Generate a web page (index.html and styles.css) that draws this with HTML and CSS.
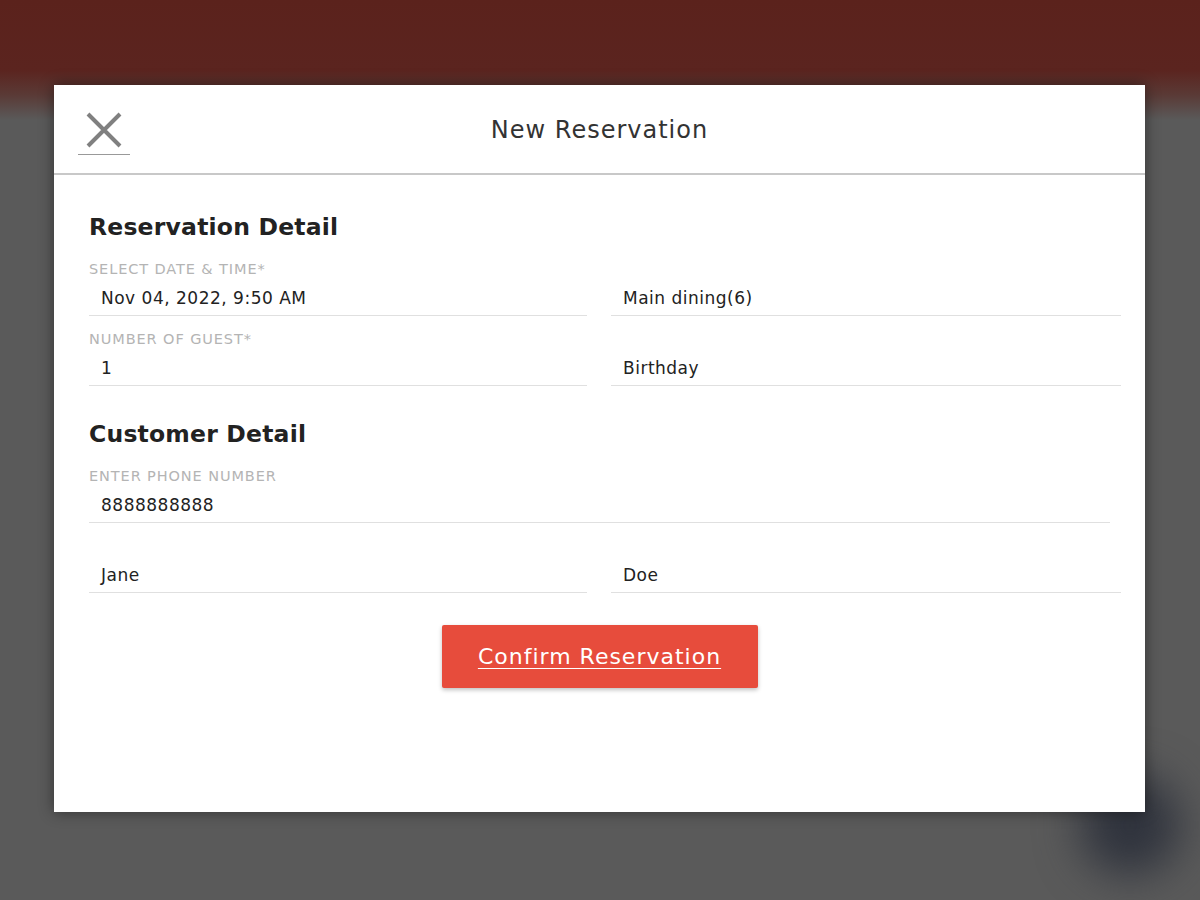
FILE: index.html
```html
<!DOCTYPE html>
<html lang="en">
<head>
  <meta charset="UTF-8">
  <title>New Reservation</title>
  <link rel="stylesheet" href="styles.css">
</head>
<body>

<div class="backdrop">
  <div class="fab-blur"></div>

  <div class="modal">
    <div class="modal-header">
      <button class="close-btn" aria-label="Close">
        <svg width="36" height="36" viewBox="0 0 36 36">
          <path d="M2 2 L34 34 M34 2 L2 34" stroke="#808080" stroke-width="4" fill="none"/>
        </svg>
      </button>
      <div class="modal-title">New Reservation</div>
    </div>

    <div class="modal-body">
      <h2 class="section-title">Reservation Detail</h2>
      <div class="field-grid">
        <div class="field">
          <label>Select date &amp; time*</label>
          <div class="value">Nov 04, 2022, 9:50 AM</div>
        </div>
        <div class="field">
          <label></label>
          <div class="value">Main dining(6)</div>
        </div>
        <div class="field">
          <label>Number of guest*</label>
          <div class="value">1</div>
        </div>
        <div class="field">
          <label></label>
          <div class="value">Birthday</div>
        </div>
      </div>

      <h2 class="section-title second">Customer Detail</h2>
      <div class="field phone">
        <label>Enter phone number</label>
        <div class="value">8888888888</div>
      </div>
      <div class="field-grid">
        <div class="field">
          <label></label>
          <div class="value">Jane</div>
        </div>
        <div class="field">
          <label></label>
          <div class="value">Doe</div>
        </div>
      </div>

      <div class="actions">
        <button class="confirm-btn">Confirm Reservation</button>
      </div>
    </div>
  </div>
</div>

</body>
</html>
```

FILE: styles.css
```css
html, body {
  margin: 0;
  height: 100%;
}

body {
  font-family: "DejaVu Sans", Arial, sans-serif;
  color: #222;
}

.backdrop {
  position: relative;
  height: 900px;
  overflow: hidden;
  display: flex;
  align-items: center;
  justify-content: center;
  background: linear-gradient(to bottom, #5b221c 0, #5b241f 70px, #5a3a36 95px, #5a5a5a 120px, #5a5a5a 100%);
}

.fab-blur {
  position: absolute;
  left: 1080px;
  top: 775px;
  width: 100px;
  height: 100px;
  border-radius: 50%;
  background: #2f333d;
  filter: blur(22px);
}

.modal {
  position: relative;
  width: 1091px;
  height: 727px;
  margin: 0 1px 3px 0;
  background: #fff;
  box-shadow: 0 0 14px rgba(0, 0, 0, 0.45);
  display: flex;
  flex-direction: column;
}

.modal-header {
  height: 88px;
  border-bottom: 2px solid #c8c8c8;
  display: flex;
  align-items: center;
  justify-content: center;
  position: relative;
}

.close-btn {
  position: absolute;
  left: 24px;
  top: 25px;
  width: 52px;
  height: 45px;
  padding: 2px 0 0;
  background: none;
  border: none;
  border-bottom: 1px solid #999;
  display: flex;
  justify-content: center;
  align-items: flex-start;
  cursor: pointer;
}

.modal-title {
  font-size: 24px;
  letter-spacing: 1px;
  color: #333;
  padding-top: 1px;
}

.modal-body {
  padding: 37px 24px 0 35px;
}

.section-title {
  margin: 0 0 17px;
  font-size: 23.5px;
  line-height: 30px;
  font-weight: 700;
  letter-spacing: 0.2px;
  color: #222;
}

.section-title.second {
  margin-top: 20px;
}

.field-grid {
  display: grid;
  grid-template-columns: 498px 510px;
  column-gap: 24px;
}

.field {
  margin-bottom: 13px;
}

.field label {
  display: block;
  height: 20px;
  line-height: 20px;
  font-size: 14.5px;
  letter-spacing: 0.9px;
  color: #b4b4b4;
  text-transform: uppercase;
}

.field .value {
  height: 36px;
  line-height: 38px;
  padding-left: 12px;
  font-size: 17px;
  letter-spacing: 0.5px;
  color: #222;
  border-bottom: 1px solid #e0e0e0;
}

.field.phone {
  width: 1021px;
}

.actions {
  display: flex;
  justify-content: center;
  padding-top: 19px;
  padding-right: 11px;
}

.confirm-btn {
  width: 316px;
  height: 63px;
  background: #e74c3c;
  color: #fff;
  border: none;
  border-radius: 2px;
  font-family: inherit;
  font-size: 22px;
  letter-spacing: 1px;
  text-decoration: underline;
  text-decoration-thickness: 1px;
  text-underline-offset: 4px;
  box-shadow: 0 2px 4px rgba(0, 0, 0, 0.25);
  cursor: pointer;
}
```
